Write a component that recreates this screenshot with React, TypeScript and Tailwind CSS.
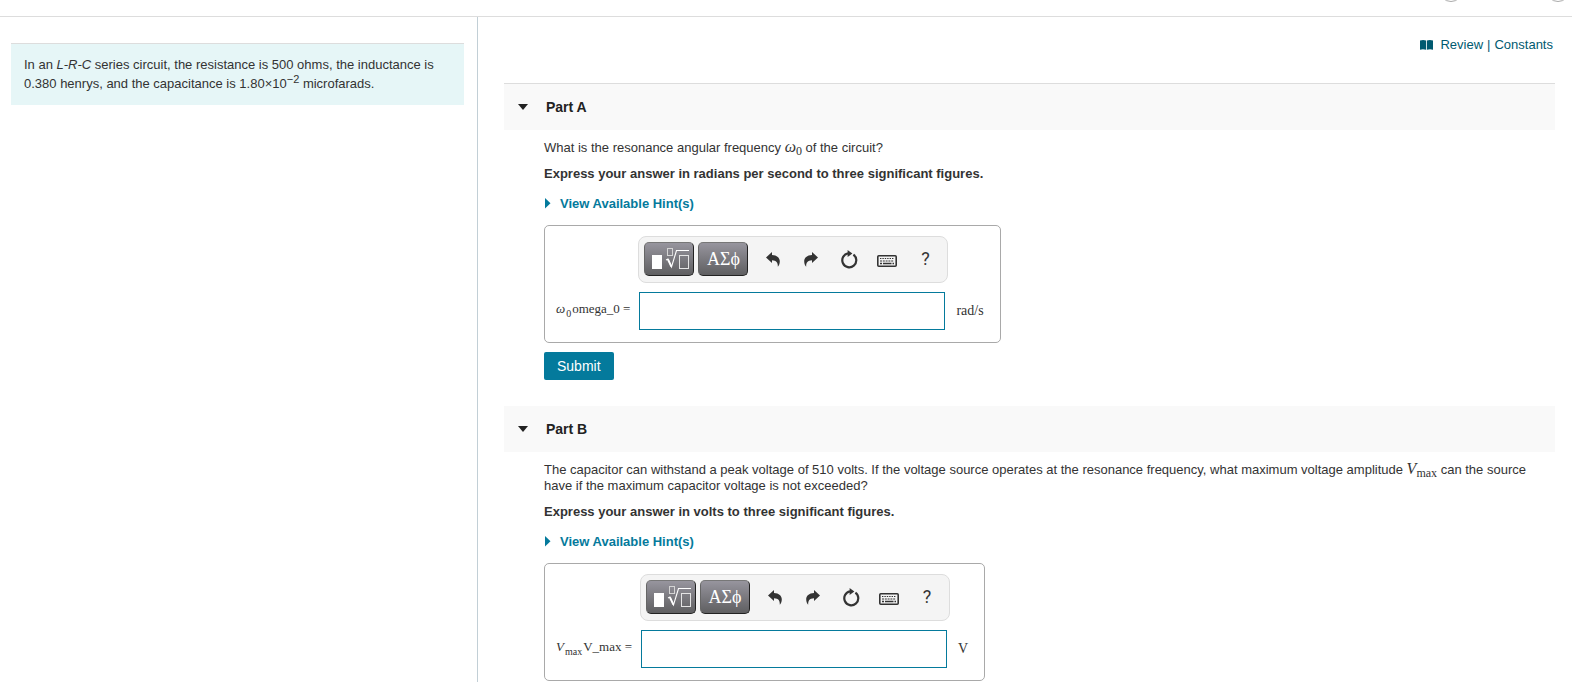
import type { ReactNode } from "react";

function BookIcon() {
  return (
    <svg viewBox="0 0 13 11" className="w-[13px] h-[11px]" fill="currentColor" aria-hidden="true">
      <path d="M0 .5Q3.2 -.4 6.1 .5V9.8Q3.2 8.9 0 9.7Z" />
      <path d="M6.9 .5Q9.8 -.4 13 .5V9.7Q9.8 8.9 6.9 9.8Z" />
    </svg>
  );
}

function TemplateIcon() {
  return (
    <svg viewBox="0 0 40 24" className="w-10 h-6" fill="none" stroke="#fff" aria-hidden="true">
      <rect x="3" y="8" width="10" height="14" fill="#fff" stroke="none" />
      <rect x="18.5" y="1.5" width="5" height="7" stroke="#d4d4d4" />
      <path d="M17 13l2-1L22.5 20L27.5 3.5H40" strokeWidth="1.1" />
      <path d="M19 12.5l3.3 7" strokeWidth="1.8" />
      <rect x="30.5" y="8.5" width="9" height="13" stroke="#e4e4e4" />
    </svg>
  );
}

function UndoIcon() {
  return (
    <svg viewBox="0 0 14 15" className="w-[14px] h-[15px]" fill="currentColor" aria-hidden="true">
      <path d="M0 5.5L6 0V3C11 3.1 13.8 6 13.8 9.2C13.8 11.5 13 13.4 11.8 14.8C12 11 10.7 8.4 6 8.3V11Z" />
    </svg>
  );
}

function RedoIcon() {
  return (
    <svg viewBox="0 0 14 15" className="w-[14px] h-[15px]" fill="currentColor" aria-hidden="true">
      <path d="M14 5.5L8 0V3C3 3.1 .2 6 .2 9.2C.2 11.5 1 13.4 2.2 14.8C2 11 3.3 8.4 8 8.3V11Z" />
    </svg>
  );
}

function ResetIcon() {
  return (
    <svg viewBox="0 0 18 19" className="w-[18px] h-[19px]" fill="none" aria-hidden="true">
      <path d="M13.4 4.6A7 7 0 1 1 8 3.4" stroke="currentColor" strokeWidth="2.2" />
      <path d="M7.6 0L12.4 3.6L7.6 7Z" fill="currentColor" />
    </svg>
  );
}

function KeyboardIcon() {
  return (
    <svg viewBox="0 -3 20 15" className="w-5 h-[15px]" fill="none" stroke="currentColor" aria-hidden="true">
      <rect x=".8" y=".8" width="18.4" height="10.4" rx="1" strokeWidth="1.6" />
      <path d="M3 3.5H17" strokeDasharray="1.4 1" />
      <path d="M3 6H17" strokeDasharray="2 .8" />
      <path d="M3 8.5H5M6 8.5H14.5M15.5 8.5H17" strokeWidth="1.4" />
    </svg>
  );
}

function ToolButton({ label, children }: { label: string; children: ReactNode }) {
  return (
    <button
      type="button"
      aria-label={label}
      className="flex items-center justify-center shrink-0 w-[38px] h-[34px] text-[#333] cursor-pointer"
    >
      {children}
    </button>
  );
}

const paletteButton =
  "flex items-center justify-center shrink-0 w-[50px] h-[34px] rounded-[5px] border border-t-[#777] border-l-[#666] border-r-[#222] border-b-[#222] bg-linear-to-b from-[#97959e] to-[#5f5f61] text-white cursor-pointer";

function Toolbar() {
  return (
    <div className="flex w-[310px] h-[47px] pt-[5px] pl-[5px] rounded-lg border border-[#ddd] bg-[#f4f4f4]">
      <button type="button" aria-label="Templates" className={paletteButton}>
        <TemplateIcon />
      </button>
      <button type="button" aria-label="Symbols" className={`${paletteButton} ml-1 mr-1.5 text-lg`}>
        ΑΣϕ
      </button>
      <ToolButton label="Undo">
        <UndoIcon />
      </ToolButton>
      <ToolButton label="Redo">
        <RedoIcon />
      </ToolButton>
      <ToolButton label="Reset">
        <ResetIcon />
      </ToolButton>
      <ToolButton label="Keyboard shortcuts">
        <KeyboardIcon />
      </ToolButton>
      <ToolButton label="Help">
        <span className="font-[Roboto,sans-serif] text-lg">?</span>
      </ToolButton>
    </div>
  );
}

function Variable({ symbol, sub }: { symbol: string; sub: string }) {
  return (
    <span className="font-['Liberation_Serif',serif] text-base leading-none">
      <i>{symbol}</i>
      <sub className="text-xs leading-none">{sub}</sub>
    </span>
  );
}

interface AnswerBoxProps {
  id: string;
  symbol: string;
  sub: string;
  name: string;
  unit: string;
}

function AnswerBox({ id, symbol, sub, name, unit }: AnswerBoxProps) {
  return (
    <div className="grid grid-cols-[auto_auto_auto] items-center gap-x-2 gap-y-[9px] w-fit rounded-[5px] border border-[#a9a9a9] pt-[10px] pb-3 pl-[11px] pr-4 font-['Liberation_Serif',serif] text-[#333]">
      <div className="col-start-2">
        <Toolbar />
      </div>
      <label htmlFor={id} className="col-start-1 text-[13px] leading-4 pb-1">
        <i>{symbol}</i>
        <sub className="-bottom-1 mx-px text-[10px] leading-none">{sub}</sub>
        {name} =
      </label>
      <input
        id={id}
        type="text"
        className="ml-px w-[306px] h-[38px] border border-[#047a9c] bg-white px-2 text-base outline-none"
      />
      <span className="text-sm leading-4">{unit}</span>
    </div>
  );
}

interface PartProps {
  title: string;
  question: ReactNode;
  instruction: string;
  children: ReactNode;
}

function Part({ title, question, instruction, children }: PartProps) {
  return (
    <section>
      <h2 className="h-[46px] bg-[#f9f9f9]">
        <button
          type="button"
          className="flex items-center h-full pl-[14px] gap-[18px] text-sm font-bold text-[#222] cursor-pointer"
        >
          <svg viewBox="0 0 10 6" className="w-[10px] h-[6px]" fill="currentColor" aria-hidden="true">
            <path d="M0 0H10L5 6Z" />
          </svg>
          {title}
        </button>
      </h2>
      <div className="pl-10 pt-[9px]">
        <p className="mb-[10px]">{question}</p>
        <p className="mb-[14px] font-bold">{instruction}</p>
        <a href="#" className="flex items-center gap-[9px] w-fit mb-[13px] font-bold text-[#047a9c]">
          <svg viewBox="0 0 7 12" className="w-[7px] h-3" fill="currentColor" aria-hidden="true">
            <path d="M1 0L6.5 5.2L1 10.4Z" />
          </svg>
          View Available Hint(s)
        </a>
        {children}
      </div>
    </section>
  );
}

export default function App() {
  return (
    <div className="flex flex-col min-h-screen bg-white font-['Liberation_Sans',sans-serif] text-[13px] leading-4 text-[#333]">
      <header className="h-[17px] overflow-hidden border-b border-[#ddd]">
        <div className="flex justify-end gap-[83px] -mt-[22px] pr-0.5">
          <button type="button" aria-label="Previous" className="size-6 rounded-full border border-[#aaa]" />
          <button type="button" aria-label="Next" className="size-6 rounded-full border border-[#aaa]" />
        </div>
      </header>

      <div className="flex flex-1">
        <aside className="w-[478px] shrink-0 border-r border-[#c2cfd6] pt-[26px] pl-[11px] pr-[13px]">
          <div className="border-t border-[#ddd] bg-[#e6f6f7] pt-[11px] pb-3 px-[13px] leading-[19px]">
            In an <i>L-R-C</i> series circuit, the resistance is 500 ohms, the inductance is 0.380
            henrys, and the capacitance is 1.80×10
            <sup className="static align-[5px] text-[11px] leading-none">−2</sup> microfarads.
          </div>
        </aside>

        <main className="flex-1 min-w-0 pl-[26px] pr-[17px]">
          <nav className="flex items-center justify-end h-[66px] pb-[10px] pr-[2px] text-[#005a70]">
            <BookIcon />
            <a href="#" className="ml-[7px]">
              Review
            </a>
            <span className="mx-1">|</span>
            <a href="#">Constants</a>
          </nav>

          <div className="border-t border-[#ddd]">
            <Part
              title="Part A"
              question={
                <>
                  What is the resonance angular frequency <Variable symbol="ω" sub="0" /> of the
                  circuit?
                </>
              }
              instruction="Express your answer in radians per second to three significant figures."
            >
              <AnswerBox id="omega" symbol="ω" sub="0" name="omega_0" unit="rad/s" />
              <button
                type="button"
                className="mt-[9px] mb-[26px] h-7 px-[13px] rounded-xs bg-[#047a9c] text-sm text-white cursor-pointer"
              >
                Submit
              </button>
            </Part>

            <Part
              title="Part B"
              question={
                <>
                  The capacitor can withstand a peak voltage of 510 volts. If the voltage source
                  operates at the resonance frequency, what maximum voltage amplitude{" "}
                  <Variable symbol="V" sub="max" /> can the source have if the maximum capacitor
                  voltage is not exceeded?
                </>
              }
              instruction="Express your answer in volts to three significant figures."
            >
              <AnswerBox id="vmax" symbol="V" sub="max" name="V_max" unit="V" />
            </Part>
          </div>
        </main>
      </div>
    </div>
  );
}
